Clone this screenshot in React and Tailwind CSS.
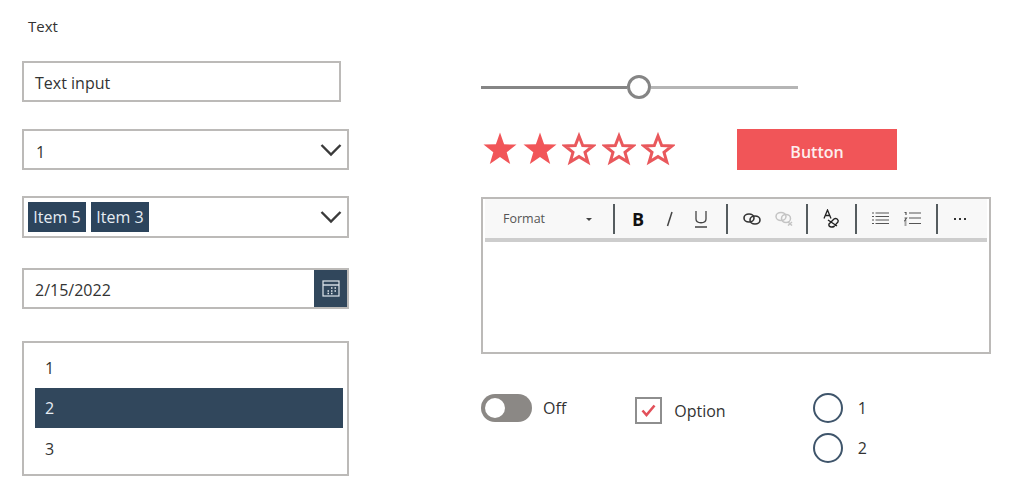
import React from "react";

const NAVY = "#31475c";
const Chevron = () => (
  <svg width="22" height="14" viewBox="0 0 22 14" fill="none" stroke="#3a3a3a" strokeWidth="2.4">
    <path d="M1.5 2 L11 11.5 L20.5 2" />
  </svg>
);

const Star = ({ filled }) =>
  filled ? (
    <svg width="34" height="34" viewBox="0 0 34 34">
      <path
        d="M17 0.5 L21.1 12.3 L33.5 12.6 L23.7 20.2 L27.2 32.1 L17 25 L6.8 32.1 L10.3 20.2 L0.5 12.6 L12.9 12.3 Z"
        fill="#f15558"
      />
    </svg>
  ) : (
    <svg width="34" height="34" viewBox="0 0 34 34">
      <path
        d="M17 4 L20.7 13.6 L31 13.9 L23 20.4 L25.8 30 L17 24.6 L8.2 30 L11 20.4 L3 13.9 L13.3 13.6 Z"
        fill="#fff"
        stroke="#e9585c"
        strokeWidth="3"
      />
    </svg>
  );

const Sep = () => <div className="w-[2px] h-[30px] bg-[#555c5f] shrink-0" />;

const Radio = ({ label }) => (
  <div className="flex items-center h-[30px]">
    <div className="w-[30px] h-[30px] rounded-full border-2 border-[#3f556b] bg-white" />
    <span className="ml-[15px] text-[16px] leading-none text-[#333]">{label}</span>
  </div>
);

export default function App() {
  return (
    <div
      className="w-[1024px] h-[504px] bg-white flex overflow-hidden text-[#333]"
      style={{ fontFamily: '"Open Sans", "Noto Sans", sans-serif' }}
    >
      <div className="w-[327px] ml-[22px] shrink-0 flex flex-col">
        <div className="h-[61px] pl-[6px] pt-[16px] text-[15px] leading-[20px]">Text</div>
        <div className="w-[319px] h-[41px] border-2 border-[#bcbab8] flex items-center pl-[11px] pt-[2px] text-[16px]">
          Text input
        </div>
        <div className="mt-[27px] h-[41px] border-2 border-[#bcbab8] flex items-center justify-between pl-[12px] pr-[5px] text-[16px]">
          <span className="mt-[4px]">1</span>
          <Chevron />
        </div>
        <div className="mt-[26px] h-[42px] border-2 border-[#bcbab8] flex items-center justify-between pl-[4px] pr-[5px] text-[16px]">
          <div className="flex gap-[5px]">
            <span className="bg-[#2c445c] text-[#e6edf3] w-[58px] h-[30px] flex items-center justify-center">Item 5</span>
            <span className="bg-[#2c445c] text-[#e6edf3] w-[58px] h-[30px] flex items-center justify-center">Item 3</span>
          </div>
          <Chevron />
        </div>
        <div className="mt-[30px] h-[41px] border-2 border-[#bcbab8] flex items-center justify-between pl-[11px] text-[16px]">
          <span className="mt-[2px]">2/15/2022</span>
          <div className="w-[33px] h-full bg-[#31475c] flex items-center justify-center">
            <svg width="18" height="17" viewBox="0 0 18 17" fill="none" stroke="#dfe6ec">
              <rect x="1" y="1" width="16" height="15" strokeWidth="1.2" />
              <path d="M1 5 H17" strokeWidth="1.4" />
              <path d="M9 8 H10.5 M12.5 8 H14 M5.5 11 H7 M9 11 H10.5 M12.5 11 H14 M5.5 13.5 H7 M9 13.5 H10.5" strokeWidth="1.3" />
            </svg>
          </div>
        </div>
        <div className="mt-[32px] h-[135px] border-2 border-[#bcbab8] flex flex-col pl-[11px] pr-[4px] pt-[5px] text-[16px]">
          <div className="h-[40px] flex items-center pl-[10px]">1</div>
          <div className="h-[40px] flex items-center pl-[10px] text-[#e6edf3]" style={{ backgroundColor: NAVY }}>2</div>
          <div className="h-[41px] flex items-center pl-[10px]">3</div>
        </div>
      </div>

      <div className="ml-[132px] w-[510px] shrink-0 flex flex-col">
        <div className="mt-[74px] w-[317px] h-[26px] flex items-center">
          <div className="w-[146px] h-[3px] bg-[#858585]" />
          <div className="w-[24px] h-[24px] rounded-full border-[3px] border-[#858585] bg-white shrink-0" />
          <div className="flex-1 h-[3px] bg-[#b5b5b5]" />
        </div>
        <div className="mt-[28px] h-[42px] flex items-center">
          <div className="flex ml-[2px] gap-[5.5px]">
            <Star filled />
            <Star filled />
            <Star />
            <Star />
            <Star />
          </div>
          <button className="ml-[62px] mt-[1px] w-[160px] h-[41px] pt-[4px] bg-[#f15558] text-[#fdeeee] text-[16px] font-semibold">
            Button
          </button>
        </div>
        <div className="mt-[27px] h-[157px] border-2 border-[#bcbab8] flex flex-col">
          <div className="h-[43px] mx-[2px] bg-[#f8f8f8] border-b-[4px] border-[#cdcdcd] flex items-center text-[#222]">
            <div className="w-[128px] flex items-center justify-between pl-[18px] pr-[21px] pt-[2px] text-[12.5px] text-[#555]">
              <span>Format</span>
              <svg width="6" height="3" viewBox="0 0 6 3"><path d="M0 0 H6 L3 3 Z" fill="#444" /></svg>
            </div>
            <Sep />
            <div className="w-[111px] flex items-center text-[#222] shrink-0">
              <span className="ml-[17px] w-[13px] text-[18px] leading-none font-bold text-[#111]">B</span>
              <svg className="ml-[21px]" width="7" height="16" viewBox="0 0 7 16" stroke="#444" strokeWidth="1.5"><path d="M6 1 L1.5 15" /></svg>
              <svg className="ml-[21px]" width="14" height="18" viewBox="0 0 14 18" fill="none" stroke="#444" strokeWidth="1.3">
                <path d="M2 1 V9 C2 14 12 14 12 9 V1 M1 17 H13" />
              </svg>
            </div>
            <Sep />
            <div className="w-[78px] flex items-center shrink-0">
              <svg className="ml-[15px]" width="18" height="14" viewBox="0 0 18 14" fill="none" stroke="#333" strokeWidth="1.6">
                <ellipse cx="6" cy="6" rx="5" ry="4" />
                <ellipse cx="12" cy="8" rx="5" ry="4" />
              </svg>
              <svg className="ml-[14px]" width="18" height="15" viewBox="0 0 18 15" fill="none" stroke="#c4c4c4" strokeWidth="1.5">
                <ellipse cx="6" cy="5.5" rx="5" ry="4" />
                <ellipse cx="11" cy="7.5" rx="4.5" ry="4" />
                <path d="M13 11 L17 14.5 M17 11 L13 14.5" />
              </svg>
            </div>
            <Sep />
            <div className="w-[47px] flex items-center shrink-0">
              <svg className="ml-[15px]" width="17" height="20" viewBox="0 0 17 20" fill="none" stroke="#222" strokeWidth="1.3">
                <path d="M1 9.5 L4.5 1 L8 9.5 M2.3 6.5 H6.7" />
                <path d="M6 15 L11 10 C13 8.5 16 10.5 15 13 L11 17.5 C9 18.5 5 18 6 15 Z M5 11 L14 17" strokeWidth="1.4" />
              </svg>
            </div>
            <Sep />
            <div className="w-[79px] flex items-center shrink-0">
              <svg className="ml-[15px]" width="17" height="13" viewBox="0 0 17 13" stroke="#555" strokeWidth="1.2">
                <path d="M0 1 H2 M0 4.5 H2 M0 8 H2 M0 11.5 H2 M3.5 1 H17 M3.5 4.5 H17 M3.5 8 H17 M3.5 11.5 H17" />
              </svg>
              <svg className="ml-[15px]" width="17" height="15" viewBox="0 0 17 15" stroke="#555" strokeWidth="1.2">
                <path d="M0.5 1.5 H2 V4 M0.5 7 H2.5 L0.5 10 H2.5 M0.5 12 H2.5 M0.5 14 H2.5 M5 2 H17 M5 7 H17 M5 12.5 H17" fill="none" />
              </svg>
            </div>
            <Sep />
            <div className="flex gap-[3px] ml-[16px]">
              <div className="w-[2px] h-[2px] bg-[#333]" />
              <div className="w-[2px] h-[2px] bg-[#333]" />
              <div className="w-[2px] h-[2px] bg-[#333]" />
            </div>
          </div>
        </div>
        <div className="mt-[39px] flex items-start">
          <div className="mt-[1px] w-[51px] h-[28px] rounded-full bg-[#8b8885] flex items-center pl-[4px]">
            <div className="w-[20px] h-[20px] rounded-full bg-white" />
          </div>
          <span className="ml-[11px] mt-[4px] text-[16px] leading-[22px]">Off</span>
          <div className="ml-[69px] mt-[4px] w-[27px] h-[27px] border-2 border-[#8e8e8e] flex items-center justify-center">
            <svg width="15" height="13" viewBox="0 0 15 13" fill="none" stroke="#e2505a" strokeWidth="2.6">
              <path d="M1.5 6.5 L5.5 11 L13.5 1.5" />
            </svg>
          </div>
          <span className="ml-[12px] mt-[7px] text-[16px] leading-[22px]">Option</span>
          <div className="ml-[87px] flex flex-col gap-[10px]">
            <Radio label="1" />
            <Radio label="2" />
          </div>
        </div>
      </div>
    </div>
  );
}
